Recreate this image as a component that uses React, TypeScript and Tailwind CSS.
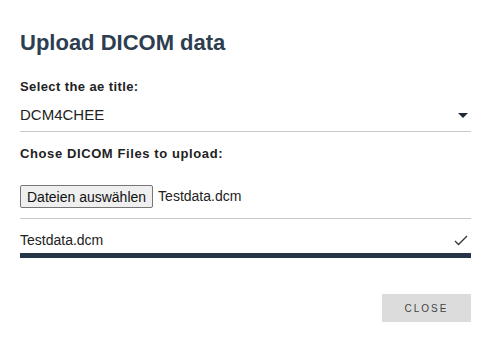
export default function App() {
  return (
    <div className="h-[342px] w-[491px] bg-white px-5 font-['Liberation_Sans',Arial,sans-serif]">
      <h2 className="pt-[31px] text-[22px] font-bold leading-6 text-[#2c3e50]">
        Upload DICOM data
      </h2>

      <p className="mt-[24px] text-[13px] font-bold leading-4 tracking-[0.4px] text-[#222]">
        Select the ae title:
      </p>

      <div className="mt-[9px] flex h-[28px] items-center justify-between border-b border-[#c8c8c8] pb-1">
        <span className="text-[15px] text-[#222]">DCM4CHEE</span>
        <svg width="10" height="6" viewBox="0 0 10 6" className="mr-[3px]">
          <path d="M0 0h10L5 5z" fill="#1e2a38" />
        </svg>
      </div>

      <p className="mt-[14px] text-[13px] font-bold leading-4 tracking-[0.6px] text-[#222]">
        Chose DICOM Files to upload:
      </p>

      <div className="mt-[23px] flex items-center gap-[5px] border-b border-[#c8c8c8] pb-[10px]">
        <button className="h-[23px] rounded-[2px] border border-[#767676] bg-[#efefef] px-[6px] text-[14px] leading-none text-[#111]">
          Dateien auswählen
        </button>
        <span className="text-[14px] text-[#222]">Testdata.dcm</span>
      </div>

      <div className="mt-[11px] flex items-center justify-between">
        <span className="text-[14px] leading-5 text-[#222]">Testdata.dcm</span>
        <svg width="14" height="11" viewBox="0 0 14 11" className="mr-[3px]">
          <path d="M1 6l3.5 3.5L13 1" fill="none" stroke="#333" strokeWidth="1.3" />
        </svg>
      </div>
      <div className="mt-[3px] h-[5px] bg-[#253447]" />

      <div className="mt-[36px] flex justify-end">
        <button className="h-[28px] w-[89px] bg-[#dcdcdc] text-[10px] tracking-[0.2em] text-[#444]">
          CLOSE
        </button>
      </div>
    </div>
  );
}
